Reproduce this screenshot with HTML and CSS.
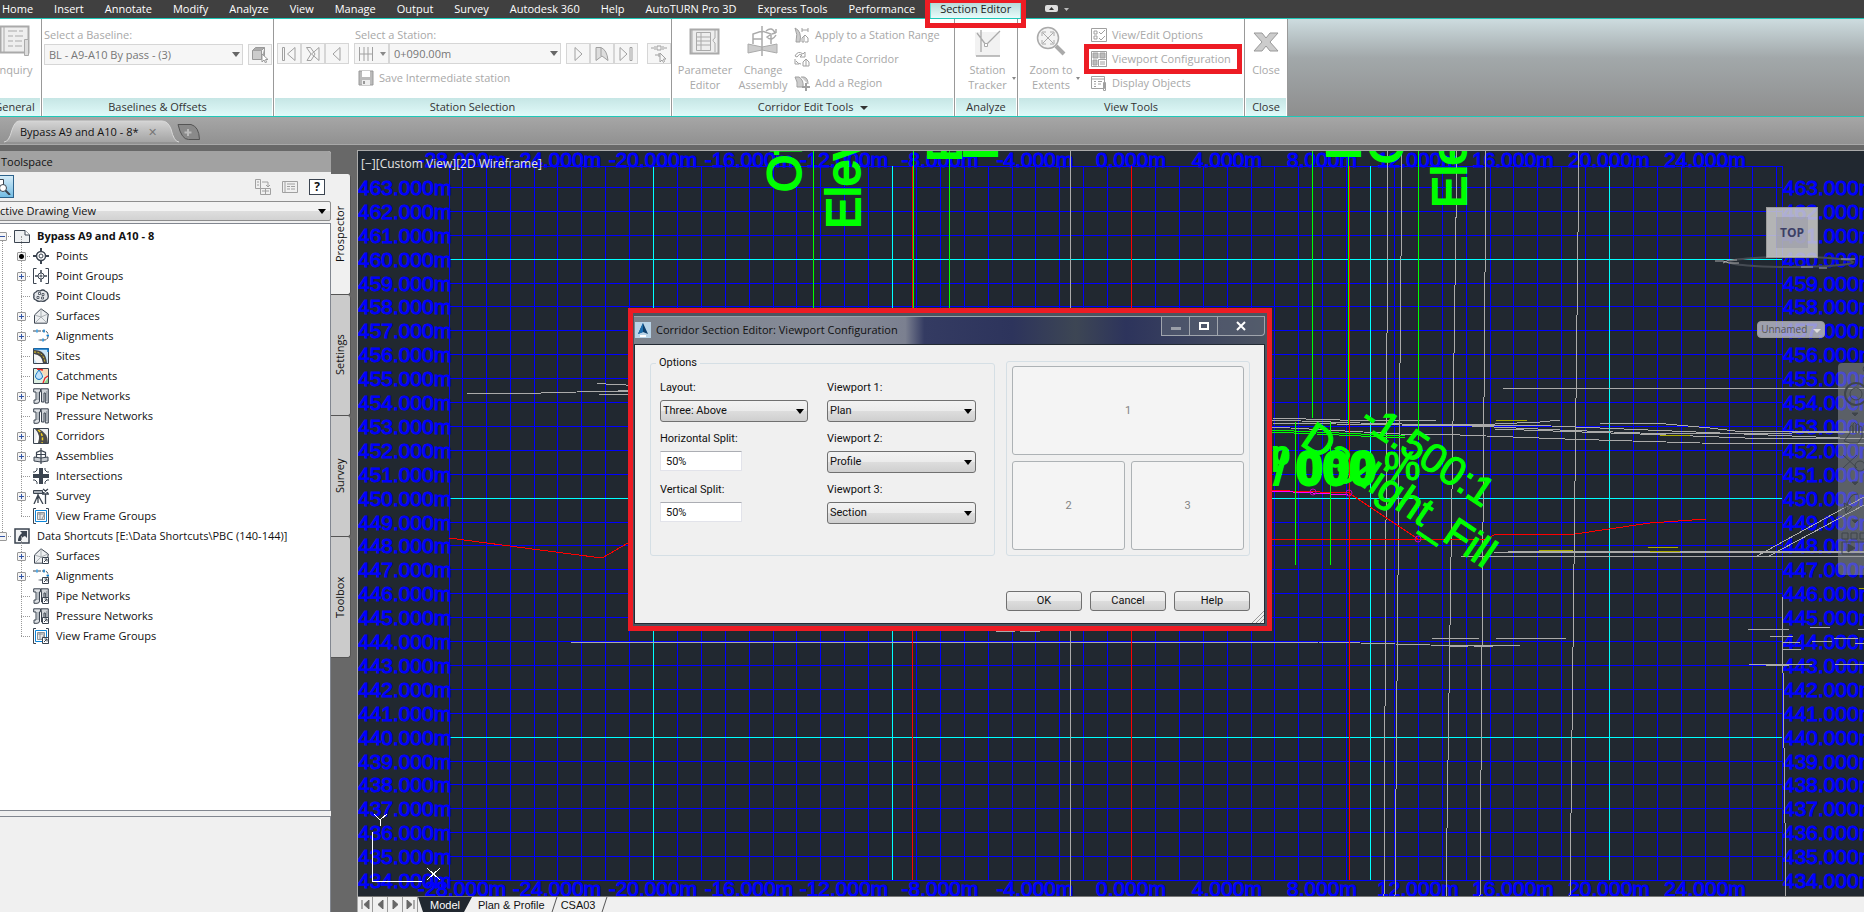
FILE: index.html
```
<!DOCTYPE html>
<html lang="en">
<head>
    <meta charset="UTF-8">
    <meta name="viewport" content="width=device-width, initial-scale=1.0">
    <title>Bypass A9 and A10 - 8</title>
    <link rel="stylesheet" href="styles.css">
</head>
<body>

    <!-- shared icons -->
    <svg class="sprite" aria-hidden="true">
        <symbol id="i-drawing" viewBox="0 0 16 16"><path d="M.5 2.500H11L15.500 7v7.500H.5z" fill="#eef0f2" stroke="#3b4450"/><path d="M11 2.500V7h4.500" fill="#fff" stroke="#3b4450"/></symbol>
        <symbol id="i-points" viewBox="0 0 16 16"><g fill="none" stroke="#3b4450"><circle cx="8" cy="8" r="4.500" stroke-width="1.500"/><circle cx="8" cy="8" r="2"/><path d="M8 0v4M8 12v4M0 8h4M12 8h4" stroke-width="2"/></g></symbol>
        <symbol id="i-pointgroups" viewBox="0 0 16 16"><g fill="none" stroke="#3b4450"><path d="M3.500 .5h-3v15h3M12.500 .5h3v15h-3"/><circle cx="8" cy="8" r="3"/><circle cx="8" cy="8" r="1"/><path d="M8 2v3M8 11v3M2 8h3M11 8h3"  stroke-width="1.500"/></g></symbol>
        <symbol id="i-clouds" viewBox="0 0 16 16"><path d="M3 4Q4 2 7 3q3-2 5 0 3 1 3 4 1 4-2 5-2 2-5 1-3 1-5-1-3-1-2-4-1-3 2-4z" fill="#e4e6e9" stroke="#3b4450" stroke-width="1.300"/><path d="M5.500 4.500h2v2h-2zM9 5.500h2v2H9zM4 8.500h2v2H4zM8.500 9h2v2h-2z" fill="#fff" stroke="#3b4450" stroke-width=".8"/></symbol>
        <symbol id="i-surfaces" viewBox="0 0 16 16"><path d="M8 .8L15.300 6 14 15.200H1.500V7z" fill="#eceef0" stroke="#3b4450"/><path d="M8 1v8M8 9l7-3M8 9l6 6M8 9l-6 6M8 9L1.500 7" fill="none" stroke="#a4a9ae" stroke-width=".9"/></symbol>
        <symbol id="i-alignments" viewBox="0 0 16 16"><path d="M0 3h3M5 3h6q4 0 4 4M15 8q0 4-4 4H5" fill="none" stroke="#3b4450" stroke-dasharray="3 1"/><path d="M4 1.500v3M11 1.500v3M13.500 7.500h2.500M10 10.500v3" stroke="#0b84d8" stroke-width="1.400"/></symbol>
        <symbol id="i-sites" viewBox="0 0 16 16"><path d="M.5 .5h15v15H.5z" fill="#c9e4f7" stroke="#3b4450"/><path d="M1 5h5l5 5v5H4L1 11z" fill="#f5f6f7"/><path d="M1 2q12 0 13 13h-4Q9 7 1 6z" fill="#474747"/><path d="M1 4q10 0 11 11" fill="none" stroke="#f2d020" stroke-dasharray="2 1.500"/><path d="M1 1h14v3" fill="none" stroke="#0b74c8" stroke-width="1.500"/></symbol>
        <symbol id="i-catchments" viewBox="0 0 16 16"><path d="M.5 .5h15v15H.5z" fill="#dcefe2" stroke="#3b4450"/><path d="M8 1h7v8l-3-1-4-4z" fill="#f6d9b8"/><path d="M10 15l2-5 3-2M4 1l6 1" fill="none" stroke="#e22" stroke-width="1.300"/><path d="M6 2Q2 7 2.500 9q1 2.500 3.500 2.500T9.500 9Q9.800 7 6 2z" fill="#bfe2fa" stroke="#1573c4"/><path d="M11 15l4-5v5z" fill="#8fce8a"/></symbol>
        <symbol id="i-pipes" viewBox="0 0 16 16"><path d="M.7 .8h6.800v3h-1V13q0 2.300-2.500 2.300H1V12h2V4H.7z" fill="#dfe2e5" stroke="#3b4450"/><path d="M8 .8h7.300V15h-3V5H11v9H8.500V5z" fill="#cfd3d8" stroke="#3b4450"/><path d="M5 4v8M13.800 3v10" stroke="#8c949d"/></symbol>
        <symbol id="i-corridors" viewBox="0 0 16 16"><path d="M.5 .5h15v15H.5z" fill="#eceef0" stroke="#3b4450"/><path d="M3 1q7 4 6 14H2Q5 8 3 1z" fill="#fff"/><path d="M2 1h4q9 4 9 14H5Q8 7 2 1z" fill="#4b4b4b"/><path d="M5 2q6 4 4 13" fill="none" stroke="#f2d020" stroke-width="1.500" stroke-dasharray="3 1.500"/></symbol>
        <symbol id="i-assemblies" viewBox="0 0 16 16"><path d="M1 9l7 1 7-1v4l-7 1-7-1z" fill="#c7cbd0" stroke="#3b4450"/><path d="M3.500 9V4.500L8 2.500l4.500 2V9M8 0v16M3.500 6.500h9" fill="none" stroke="#3b4450" stroke-width="1.200"/></symbol>
        <symbol id="i-intersections" viewBox="0 0 16 16"><path d="M8 0v16M0 8h16" stroke="#3b4450" stroke-width="4"/><path d="M4 0v2L2 4H0M12 0v2l2 2h2M4 16v-2l-2-2H0M12 16v-2l2-2h2" fill="none" stroke="#3b4450"/></symbol>
        <symbol id="i-survey" viewBox="0 0 16 16"><path d="M.5 2.500h9v3h-9z" fill="#aab0b7" stroke="#3b4450"/><path d="M5 6v4M5 7l-4 9M5 7l5 9M5 8v7M12.500 6v10M9 6h7M10 1l5 4M15 1l-5 4" fill="none" stroke="#3b4450" stroke-width="1.300"/></symbol>
        <symbol id="i-frames" viewBox="0 0 16 16"><path d="M3 .5H.5v15H3M13 .5h2.500v15H13" fill="none" stroke="#3b4450"/><path d="M2.500 2.500h11v11h-11z" fill="#fff" stroke="#0b84d8"/><path d="M4.500 4.500h7v7h-7z" fill="#e8e8e8" stroke="#8c9298"/><path d="M5 6h6M7 5v6M9 11l2-4" stroke="#8c9298"/></symbol>
        <symbol id="i-link" viewBox="0 0 16 16"><path d="M9.500 9.500h6v6h-6z" fill="#fff" stroke="#3b4450"/><path d="M11 14l3-3M11.500 11H14v2.500" fill="none" stroke="#3b4450"/></symbol>
        <symbol id="i-shortcuts" viewBox="0 0 16 16"><path d="M1 1h14v14H1z" fill="#f2f3f4" stroke="#3b4450" stroke-width="1.500"/><path d="M6 3h7v7l-2-2q-4 1-4 5H4q0-5 4-8z" fill="#3b4450"/></symbol>
    </svg>

    <nav class="menu-bar">
        <a href="#">Home</a>
        <a href="#">Insert</a>
        <a href="#">Annotate</a>
        <a href="#">Modify</a>
        <a href="#">Analyze</a>
        <a href="#">View</a>
        <a href="#">Manage</a>
        <a href="#">Output</a>
        <a href="#">Survey</a>
        <a href="#">Autodesk 360</a>
        <a href="#">Help</a>
        <a href="#">AutoTURN Pro 3D</a>
        <a href="#">Express Tools</a>
        <a href="#">Performance</a>
        <a href="#" class="active">Section Editor</a>
        <button class="ribbon-toggle" aria-label="Minimize ribbon">
            <svg width="26" height="8" viewBox="0 0 26 8"><rect width="13" height="7" rx="2" fill="#ddd"/><path d="M4 5l2.500-3L9 5z" fill="#333"/><path d="M19 3h5l-2.500 3z" fill="#bbb"/></svg>
        </button>
    </nav>

    <div class="ribbon">
        <section class="panel panel-general">
            <div class="panel-body">
                <button class="big" disabled>
                    <svg width="32" height="32" viewBox="0 0 32 32" fill="none" stroke="#aaa"><path d="M1.500 1.500h28v26h-28z" fill="#eee" stroke-width="2"/><path d="M5 2v25M9 6h9M20 6h4M9 11h5M16 11h8M9 16h5M16 16h7M9 21h5M16 21h7"/><path d="M25.500 14.500h4v16h-4z" fill="#ddd"/></svg>
                    Inquiry
                </button>
            </div>
            <h2>General</h2>
        </section>

        <section class="panel panel-baselines">
            <div class="panel-body stack">
                <label for="baseline">Select a Baseline:</label>
                <div class="tool-row">
                    <span class="combo"><select id="baseline"><option>BL - A9-A10 By pass - (3)</option></select></span>
                    <button class="tool" disabled aria-label="Pick baseline"><svg width="18" height="18" viewBox="0 0 18 18" stroke="#999" fill="#ccc"><path d="M1.500 4.500h9v9h-9z"/><path d="M1.500 4.500l3-3h9l-3 3M13.500 1.500v8l-3 3" fill="#aaa"/><path d="M11 8v8l2-2 1.500 3 1-1-1-2.500H17z" fill="#fff"/></svg></button>
                </div>
            </div>
            <h2>Baselines &amp; Offsets</h2>
        </section>

        <section class="panel panel-station">
            <div class="panel-body stack">
                <label class="station-label" for="station">Select a Station:</label>
                <div class="tool-row">
                    <div class="group">
                        <button class="tool" disabled aria-label="First station"><svg class="line" width="16" height="16"><path d="M1.500 1.500h2v13h-2zM14 1.500v13L6.500 8z"/></svg></button>
                        <button class="tool" disabled aria-label="Previous region"><svg class="line" width="16" height="16"><path d="M1.500 1.500h4L10 8l-4 6.500h-4L6 8zM14 1.500v13L6.500 8z"/></svg></button>
                        <button class="tool" disabled aria-label="Previous station"><svg class="line" width="16" height="16"><path d="M11 1.500v13L4 8z"/></svg></button>
                    </div>
                    <div class="group station-pick">
                        <button class="tool split" disabled aria-label="Station list"><svg class="line" width="16" height="14"><path d="M1.500 0v14M6 0v14M10 0v14M14.500 0v14M1 7h14"/></svg><i class="caret"></i></button>
                        <span class="combo"><select id="station"><option>0+090.00m</option></select></span>
                    </div>
                    <div class="group">
                        <button class="tool" disabled aria-label="Next station"><svg class="line" width="16" height="16"><path d="M5 1.500v13L12 8z"/></svg></button>
                        <button class="tool" disabled aria-label="Next region"><svg class="line" width="16" height="16"><path d="M2 1.500v13L8 10l6 4.500Q13 4 7 1.500L2 1.500M7 2v8" fill="#ddd"/></svg></button>
                        <button class="tool" disabled aria-label="Last station"><svg class="line" width="16" height="16"><path d="M2 1.500v13L9 8zM12 1.500h2v13h-2z"/></svg></button>
                    </div>
                    <button class="tool last-tool" disabled aria-label="Pick station"><svg class="line" width="18" height="18"><path d="M1 3h3M14 3h3M7 1h4v4H7zM13 1v4M5 1v4M10 8v9l2-2 1.500 2.500 1-1-1-2.500H16zM5 10h4M9 8v4"/></svg></button>
                </div>
                <button class="small save" disabled>
                    <svg width="16" height="16" viewBox="0 0 16 16"><path d="M1 1h14v14H1z" fill="#bbb" stroke="#999"/><path d="M4 1h8v6H4z" fill="#fff"/><path d="M4 10h8v5H4z" fill="#eee"/><path d="M5 11h2v3H5z" fill="#999"/></svg>
                    Save Intermediate station
                </button>
            </div>
            <h2>Station Selection</h2>
        </section>

        <section class="panel panel-corridor">
            <div class="panel-body">
                <button class="big" disabled>
                    <svg width="32" height="32" viewBox="0 0 32 32" fill="none" stroke="#aaa"><path d="M1.500 4.500h28v24h-28z" fill="#eee" stroke-width="2"/><path d="M7.500 7.500h14v18h-14zM7 12h14M7 16h14M7 20h14M12 8v17M3 5v23M26 5v8q-4 2 0 5v9"/></svg>
                    Parameter<br>Editor
                </button>
                <button class="big" disabled>
                    <svg width="32" height="32" viewBox="0 0 32 32" fill="none" stroke="#aaa"><path d="M1 19l14 3 15-3v9l-15-3-14 3z" fill="#ccc"/><path d="M6 19V9l9-3 9 3v10M15 1v30M6 14h9M19 6q6-5 9 2l-3 1M29 10q-4 7-9 2l3-2M29 4v4" stroke-width="1.500"/></svg>
                    Change<br>Assembly
                </button>
                <div class="small-list">
                    <button class="small" disabled><svg class="line" width="16" height="16"><path d="M1 1q7 3 5 14H2Q4 7 1 1z" fill="#ccc"/><path d="M8 1v4M14 1v4M8 3h6M10 9v6H8v-4l3-3 3 3v4h-3"/></svg>Apply to a Station Range</button>
                    <button class="small" disabled><svg class="line" width="16" height="16"><path d="M1 5q3-6 8-2l2-2v5H6l2-2Q5 2 3 6zM1 8v5h4M2 10q2 3 5 3M9 15v-4l3-3 3 3v4zM12 8v7"/></svg>Update Corridor</button>
                    <button class="small" disabled><svg class="line" width="16" height="16"><path d="M1 2h4q5 3 4 10H3Q4 7 1 2zM7 2h3q4 1 4 7" fill="#ccc"/><path d="M12 8v8M8 12h8" stroke-width="2"/></svg>Add a Region</button>
                </div>
            </div>
            <h2>Corridor Edit Tools <i class="caret dark"></i></h2>
        </section>

        <section class="panel panel-analyze">
            <div class="panel-body">
                <button class="big" disabled>
                    <svg width="32" height="32" viewBox="0 0 32 32" fill="none" stroke="#aaa"><path d="M3 7v24h25V7z" fill="#f2f2f2" stroke="none"/><path d="M9 5v22M4 31h24M5 8l9 12L28 6" stroke-width="1.300"/><path d="M12.500 18.500h3v3h-3z" fill="#fff"/></svg>
                    Station<br>Tracker
                </button>
                <i class="caret corner"></i>
            </div>
            <h2>Analyze</h2>
        </section>

        <section class="panel panel-view">
            <div class="panel-body">
                <button class="big" disabled>
                    <svg width="32" height="32" viewBox="0 0 32 32" fill="none" stroke="#aaa"><circle cx="13" cy="13" r="10.500" fill="#f3f3f3" stroke-width="1.500"/><path d="M21 21l8 8" stroke-width="4"/><path d="M8 8l10 10M18 8L8 18M7 11V7h4M15 7h4v4M7 15v4h4M19 15v4h-4"/></svg>
                    Zoom to<br>Extents
                </button>
                <i class="caret corner"></i>
                <div class="small-list">
                    <button class="small" disabled><svg class="line" width="16" height="16"><path d="M.5 1.500h15v13H.5zM3 4h3v3H3zM3 9h3v3H3zM8 5l2 2 4-4M8 11l2 2 4-4"/></svg>View/Edit Options</button>
                    <button class="small highlighted" disabled><svg class="line" width="16" height="16"><path d="M.5 .5h15v15H.5z"/><path d="M2 2h5v5H2zM9 2h5v5H9zM2 9h4v5H2z" fill="#bbb"/><path d="M7.500 8.500h8v7h-8zM9 11h5M9 13h5" fill="#fff"/></svg>Viewport Configuration</button>
                    <button class="small" disabled><svg class="line" width="16" height="16"><path d="M.5 1.500h13v12H.5zM.5 4h13M3 6.500h2M7 6.500h4M3 9h2M7 9h3M3 11.500h2M12.500 7.500h2v8h-2z"/></svg>Display Objects</button>
                </div>
            </div>
            <h2>View Tools</h2>
        </section>

        <section class="panel panel-close">
            <div class="panel-body">
                <button class="big" disabled>
                    <svg width="32" height="32" viewBox="0 0 32 32"><path d="M4 8h8l4 5 4-5h8l-8 9 8 9h-8l-4-5-4 5H4l8-9z" fill="#ccc" stroke="#999"/></svg>
                    Close
                </button>
            </div>
            <h2>Close</h2>
        </section>
    </div>

    <div class="file-tabs">
        <svg class="file-shapes" width="210" height="27" viewBox="0 0 210 27">
            <defs><linearGradient id="tab" x2="0" y2="1"><stop offset="0" stop-color="#d4d4d4"/><stop offset="1" stop-color="#a4a4a4"/></linearGradient></defs>
            <path d="M4 25q5 0 8-12 3-9 7-9h143q6 0 9 8 3 13 8 13z" fill="url(#tab)"/>
            <path d="M4 25q5 0 8-12 3-9 7-9h143q6 0 9 8 3 13 8 13" fill="none" stroke="#d8d8d8"/>
            <path d="M178 7.500h13q8 2 8.500 15h-11q-7 0-10.500-15z" fill="#8a8a8a" stroke="#555"/>
            <path d="M188 12v7M184.500 15.500h7" stroke="#bbb" stroke-width="2"/>
        </svg>
        <a class="file-tab" href="#">Bypass A9 and A10 - 8*</a>
        <button class="file-close" aria-label="Close drawing">✕</button>
    </div>

    <main class="workspace">
        <aside class="toolspace">
            <h1>Toolspace</h1>
            <div class="toolspace-tools">
                <button class="finder" aria-label="Item view"><svg width="16" height="16" viewBox="0 0 16 16" fill="#fff" stroke="#3b4450"><path d="M.5 .5h8v11h-8z"/><circle cx="8" cy="9" r="3.500"/><path d="M10.500 11.500L15 16" stroke-width="2"/></svg></button>
                <button class="flat" aria-label="Panorama"><svg class="line" width="16" height="16"><path d="M.5 .5h5v9h-5zM2 3h2M2 6h2M7 3h6v5M11 6l2 2 2-2M5.500 9.500h10v6h-10zM7 12h3M11 12h3M10.500 10v5"/></svg></button>
                <button class="flat" aria-label="Preview"><svg class="line" width="16" height="16"><path d="M.5 2.500h15v11H.5zM3 3v10M5 5h8M5 7.500h3M9 7.500h4M5 10h3M9 10h4"/></svg></button>
                <button class="help" aria-label="Help">?</button>
            </div>
            <div class="view-picker"><select aria-label="Toolspace view"><option>Active Drawing View</option></select></div>

            <ul class="tree">
                <li class="root"><button class="expander minus" aria-label="Collapse"></button><svg><use href="#i-drawing"/></svg><b>Bypass A9 and A10 - 8</b>
                    <ul>
                        <li><button class="expander dot" aria-label="Points"></button><svg><use href="#i-points"/></svg>Points</li>
                        <li><button class="expander" aria-label="Expand"></button><svg><use href="#i-pointgroups"/></svg>Point Groups</li>
                        <li><svg><use href="#i-clouds"/></svg>Point Clouds</li>
                        <li><button class="expander" aria-label="Expand"></button><svg><use href="#i-surfaces"/></svg>Surfaces</li>
                        <li><button class="expander" aria-label="Expand"></button><svg><use href="#i-alignments"/></svg>Alignments</li>
                        <li><svg><use href="#i-sites"/></svg>Sites</li>
                        <li><svg><use href="#i-catchments"/></svg>Catchments</li>
                        <li><button class="expander" aria-label="Expand"></button><svg><use href="#i-pipes"/></svg>Pipe Networks</li>
                        <li><svg><use href="#i-pipes"/></svg>Pressure Networks</li>
                        <li><button class="expander" aria-label="Expand"></button><svg><use href="#i-corridors"/></svg>Corridors</li>
                        <li><button class="expander" aria-label="Expand"></button><svg><use href="#i-assemblies"/></svg>Assemblies</li>
                        <li><svg><use href="#i-intersections"/></svg>Intersections</li>
                        <li><button class="expander" aria-label="Expand"></button><svg><use href="#i-survey"/></svg>Survey</li>
                        <li><svg><use href="#i-frames"/></svg>View Frame Groups</li>
                    </ul>
                </li>
                <li class="root"><button class="expander minus" aria-label="Collapse"></button><svg><use href="#i-shortcuts"/></svg>Data Shortcuts [E:\Data Shortcuts\PBC (140-144)]
                    <ul>
                        <li><button class="expander" aria-label="Expand"></button><svg><use href="#i-surfaces"/><use href="#i-link"/></svg>Surfaces</li>
                        <li><button class="expander" aria-label="Expand"></button><svg><use href="#i-alignments"/><use href="#i-link"/></svg>Alignments</li>
                        <li><svg><use href="#i-pipes"/><use href="#i-link"/></svg>Pipe Networks</li>
                        <li><svg><use href="#i-pipes"/><use href="#i-link"/></svg>Pressure Networks</li>
                        <li><svg><use href="#i-frames"/><use href="#i-link"/></svg>View Frame Groups</li>
                    </ul>
                </li>
            </ul>
            <div class="item-view"></div>
        </aside>

        <div class="side-tabs">
            <button class="active">Prospector</button>
            <button>Settings</button>
            <button>Survey</button>
            <button>Toolbox</button>
        </div>

        <div class="canvas-column">
            <div class="canvas">
                <svg class="drawing" viewBox="358 151 1506 746" preserveAspectRatio="xMinYMin slice">
                    <g id="grid" class="grid"></g>

                    <g class="ground">
                        <path d="M1388 151L1384 897M1402 151L1395 897M1457 151L1446 897M1486 151L1480 897M1579 151L1570 897M1782 597L1786 897M1070 151V896"/>
                        <path d="M467 393H541L577 392 612 391H628M597 383L606 384H624L628 386M599 394H628M609 392L628 390"/>
                        <path d="M1503 388H1864"/>
                        <path d="M1272 418L1340 420H1436M1272 420L1360 423 1444 425H1527L1600 428 1864 439M1272 427L1400 434 1460 435 1565 439 1700 443 1864 444M1444 424H1495L1540 422 1560 420"/>
                        <path d="M1495 429L1640 434 1745 438H1864M1472 426L1560 430 1640 433 1720 434 1864 432M1600 423H1655L1710 428 1735 431H1864M1272 423L1400 425 1520 426"/>
                        <path d="M1494 552H1864M1508 551H1864M1461 556H1864M1757 556L1864 497M1769 556L1864 505"/>
                        <path d="M571 642H1318L1360 643 1430 645 1520 646H1864M1432 638H1479M1496 638H1566M1449 646H1468M1474 646H1493"/>
                        <path d="M1748 630L1790 629M1770 636H1793M1810 627H1830M1782 642H1800M1812 641H1832M1834 638H1858M1782 649H1801M1749 664H1812M1766 665H1789M1835 664H1864M1858 629H1864M1855 643H1864M996 631H1015M1020 631H1040"/>
                    </g>
                    <path class="yellow" d="M1496 420H1527M1660 435H1690M1539 550H1573M1648 547H1678M1650 551H1680M1859 588H1864"/>
                    <path class="red" d="M912 166V880M1131 166V880M1349 166V880M449 538L540 550 602 558 628 543M1272 540L1410 539 1485 540 1494 535 1575 534 1650 523 1706 519M1272 490L1290 491 1349 493 1418 539"/>
                    <path class="magenta" d="M1272 491L1313 493 1348 495"/>
                    <path class="green" d="M813 151V320M913 151V320M949 151V320M1312 151V418M1348 151V424M1418 151V440M1295 422V565M1330 422V565M1272 430L1405 436M1272 432L1405 438"/>
                    <g class="marks"><circle cx="1313" cy="492" r="3"/><circle cx="1349" cy="493" r="3"/><circle cx="1418" cy="539" r="3"/></g>

                    <g class="notes">
                        <text transform="translate(801 192) rotate(-90)">Offset</text>
                        <text transform="translate(860 229) rotate(-90)">Elev</text>
                        <text transform="translate(961 162) rotate(-90)">E</text>
                        <text transform="translate(997 160) rotate(-90)">L</text>
                        <text transform="translate(1360 160) rotate(-90)">L</text>
                        <text transform="translate(1403 164) rotate(-90)">O</text>
                        <text transform="translate(1466 208) rotate(-90)">Elev</text>
                        <text class="slope" transform="translate(1358 424) rotate(34)">-1.500:1</text>
                        <text class="slope" transform="translate(1299 444) rotate(34)">Daylight_Fill</text>
                        <text class="percent" x="1274" y="485">/<tspan class="heavy" x="1296">000</tspan></text>
                        <text class="small-note" x="1272" y="464">p</text>
                        <text class="slope" x="1384" y="480">%</text>
                    </g>

                    <path class="ucs" d="M372 832V881H422M374 814L380 820V826M387 814L380 820M427 868L440 880M440 868L427 880"/>
                </svg>

                <div class="view-label">[−][Custom View][2D Wireframe]</div>

                <svg class="compass" width="144" height="16" viewBox="0 0 144 16"><ellipse cx="76" cy="7" rx="62" ry="5" fill="none" stroke="#454b53" stroke-width="2"/><path d="M0 6h8l6 2h10M22 5h-8l-6 3M86 12h12M104 13h8M126 4h14" fill="none" stroke="#aaa"/></svg>
                <button class="view-cube"><span>TOP</span></button>
                <button class="ucs-menu">Unnamed <i></i></button>

                <div class="nav-bar">
                    <svg width="40" height="212" viewBox="0 0 40 212" fill="none" stroke="#3f454b">
                        <circle cx="28" cy="6" r="3"/>
                        <circle cx="18" cy="31" r="11" stroke-width="2"/><circle cx="18" cy="31" r="6"/><path d="M14 50h6l-3 3z" fill="#3f454b"/>
                        <path d="M6 78l6-8v-6q2-3 3 0v6-9q2-3 3 0v9-8q2-2 3 0v8-6q3-2 3 2v8l-4 6h-8z"/>
                        <path d="M5 92l14 13M19 92L5 105"/><circle cx="22" cy="103" r="5"/><path d="M14 119h6l-3 3z" fill="#3f454b"/>
                        <path d="M8 148q2-18 12-17M6 140l8 4-6 6z"/><path d="M14 157h6l-3 3z" fill="#3f454b"/>
                        <path d="M4 170h6v6H4zM13 170h6v6h-6zM22 170h6v6h-6zM4 179h24v12H4z"/><path d="M10 181l7 4-7 4z" fill="#3f454b"/>
                    </svg>
                </div>
            </div>

            <div class="layout-tabs">
                <button aria-label="First layout"><svg width="9" height="9"><path d="M1 0v9M8 0v9L3 4.500z"/></svg></button>
                <button aria-label="Previous layout"><svg width="9" height="9"><path d="M7 0v9L2 4.500z"/></svg></button>
                <button aria-label="Next layout"><svg width="9" height="9"><path d="M2 0v9l5-4.500z"/></svg></button>
                <button aria-label="Last layout"><svg width="9" height="9"><path d="M1 0v9l5-4.500zM8 0v9"/></svg></button>
                <a href="#" class="active">Model</a>
                <a href="#">Plan &amp; Profile</a>
                <a href="#">CSA03</a>
            </div>
        </div>
    </main>

    <div class="dialog" role="dialog" aria-labelledby="dialog-title">
        <div class="dialog-title">
            <svg width="16" height="16" viewBox="0 0 16 16"><path d="M0 0h16v16H0z" fill="#b9d4e8"/><path d="M8 1l5 11-5-2-5 2z" fill="#0d3f6e"/><path d="M8 1v9l-5 2z" fill="#1c6fae"/><path d="M5 14h6" stroke="#fff" stroke-width="2"/></svg>
            <span id="dialog-title">Corridor Section Editor: Viewport Configuration</span>
            <div class="window-buttons">
                <button aria-label="Minimize"><svg width="12" height="10"><path d="M1 6h10v3H1z" fill="#9a9fa8"/></svg></button>
                <button aria-label="Maximize"><svg width="12" height="10"><path d="M2 2h8v6H2z" fill="none" stroke="#fff" stroke-width="2"/></svg></button>
                <button class="close" aria-label="Close"><svg width="12" height="10"><path d="M2 1l8 8M10 1L2 9" stroke="#fff" stroke-width="2"/></svg></button>
            </div>
        </div>
        <form class="dialog-body">
            <div class="groups">
                <fieldset class="options">
                    <legend>Options</legend>
                    <div class="field">
                        <label for="layout">Layout:</label>
                        <span class="pick"><select id="layout"><option>Three: Above</option></select></span>
                    </div>
                    <div class="field">
                        <label for="vp1">Viewport 1:</label>
                        <span class="pick"><select id="vp1"><option>Plan</option><option>Profile</option><option>Section</option></select></span>
                    </div>
                    <div class="field">
                        <label for="hsplit">Horizontal Split:</label>
                        <input id="hsplit" type="text" value="50%">
                    </div>
                    <div class="field">
                        <label for="vp2">Viewport 2:</label>
                        <span class="pick"><select id="vp2"><option>Profile</option><option>Plan</option><option>Section</option></select></span>
                    </div>
                    <div class="field">
                        <label for="vsplit">Vertical Split:</label>
                        <input id="vsplit" type="text" value="50%">
                    </div>
                    <div class="field">
                        <label for="vp3">Viewport 3:</label>
                        <span class="pick"><select id="vp3"><option>Section</option><option>Plan</option><option>Profile</option></select></span>
                    </div>
                </fieldset>
                <div class="preview">
                    <button type="button" class="wide" disabled>1</button>
                    <button type="button" disabled>2</button>
                    <button type="button" disabled>3</button>
                </div>
            </div>
            <div class="actions">
                <button type="button">OK</button>
                <button type="button">Cancel</button>
                <button type="button">Help</button>
            </div>
            <svg class="grip" width="12" height="12"><path d="M0 12L12 0M4 12l8-8M8 12l4-4"/></svg>
        </form>
    </div>

    <script src="script.js"></script>
</body>
</html>
```

FILE: styles.css
```
* {
    margin: 0;
    padding: 0;
    box-sizing: border-box;
}

body {
    font-family: "Open Sans", "Noto Sans", sans-serif;
    font-size: 11px;
    line-height: 16px;
    height: 100vh;
    display: flex;
    flex-direction: column;
    overflow: hidden;
    background: #686868;
    position: relative;
}

button, select, input {
    font: inherit;
    color: inherit;
}

button {
    background: none;
    border: none;
}

a {
    color: inherit;
    text-decoration: none;
}

svg {
    display: block;
    flex: none;
}

.sprite {
    position: absolute;
    width: 0;
    height: 0;
}

/* Menu bar */
.menu-bar {
    display: flex;
    height: 19px;
    background: #404040;
    border-bottom: 1px solid #1fc8b8;
    color: #fff;
    line-height: 18px;
    white-space: nowrap;
    padding-left: 2px;
    gap: 21px;
}

.menu-bar .active {
    position: relative;
    color: #222;
    background: linear-gradient(#aed6d4, #e8fbfa);
    margin: 0 -9px 0 -6px;
    padding: 0 9px;
    border: solid #5fe0d8;
    border-width: 0 1px;
}

.menu-bar .active::after {
    content: "";
    position: absolute;
    z-index: 2;
    inset: -2px -6px -10px;
    border: 5px solid #ed1c24;
}

.ribbon-toggle {
    margin-left: 12px;
}

/* Ribbon */
.ribbon {
    display: flex;
    height: 98px;
    background: linear-gradient(#cddcdf, #a2a8aa 40%, #8e8e8e);
    border-bottom: 1px solid #1fc8b8;
    color: #a8a8a8;
    white-space: nowrap;
}

.panel {
    display: flex;
    flex-direction: column;
    background: #fff;
    border-right: 1px solid #999;
    padding: 0 1px;
}

.panel-body {
    flex: 1;
    display: flex;
    align-items: flex-start;
    padding: 4px 3px 0;
    position: relative;
}

.panel-body.stack {
    flex-direction: column;
    padding: 8px 0 0 1px;
}

.panel h2 {
    height: 18px;
    font-size: 11px;
    line-height: 18px;
    font-weight: normal;
    text-align: center;
    color: #333;
    background: linear-gradient(#c6e6e5, #e0faf9);
}

.panel-general {
    width: 54px;
    margin-left: -12px;
}

.panel-baselines {
    width: 232px;
}

.panel-station {
    width: 398px;
}

.panel-corridor {
    width: 283px;
}

.panel-analyze {
    width: 63px;
}

.panel-view {
    width: 227px;
}

.panel-close {
    width: 43px;
}

.panel-close .panel-body,
.panel-general .panel-body,
.panel-analyze .panel-body {
    justify-content: center;
}

.big {
    display: flex;
    flex-direction: column;
    align-items: center;
    line-height: 15px;
    padding-top: 2px;
    width: 58px;
    color: inherit;
}

.big svg {
    margin-bottom: 5px;
}

.small-list {
    display: flex;
    flex-direction: column;
    gap: 8px;
    padding: 4px 0 0 2px;
}

.small {
    display: flex;
    align-items: center;
    gap: 5px;
    height: 16px;
    color: inherit;
}

.highlighted {
    width: 144px;
    outline: 5px solid #ed1c24;
    outline-offset: 2px;
}

.line {
    fill: none;
    stroke: #a0a0a0;
}

.tool-row {
    display: flex;
    align-items: center;
}

.group {
    display: flex;
}

.tool {
    width: 24px;
    height: 21px;
    border: 1px solid #d6d6d6;
    background: #f6f6f6;
    display: flex;
    align-items: center;
    justify-content: center;
}

.split {
    width: 35px;
    gap: 6px;
}

.combo {
    position: relative;
    flex: 1;
}

.combo select {
    display: block;
    appearance: none;
    width: 100%;
    height: 21px;
    border: 1px solid #d6d6d6;
    background: #f6f6f6;
    color: #777;
    padding-left: 4px;
}

.combo::after,
.pick::after,
.view-picker::after {
    content: "";
    position: absolute;
    right: 3px;
    top: 8px;
    border: 4px solid transparent;
    border-top: 5px solid #666;
    border-bottom: none;
    pointer-events: none;
}

.caret {
    display: inline-block;
    border: 3px solid transparent;
    border-top: 4px solid #888;
    border-bottom: none;
}

.caret.dark {
    border-width: 4px 4px 0;
    border-top-color: #333;
    margin-left: 4px;
    vertical-align: 1px;
}

.caret.corner {
    align-self: flex-end;
    margin: 0 -3px 18px -4px;
    border-width: 3px 2px 0;
}

.panel-baselines .tool-row {
    width: 228px;
    gap: 5px;
    margin-top: 1px;
}

.panel-station .tool-row {
    padding: 0 1px;
    gap: 5px;
    width: 396px;
}

.station-label {
    padding-left: 79px;
}

.station-pick {
    flex: 1;
}

.last-tool {
    margin-left: 4px;
}

.save {
    margin: 6px 0 0 82px;
}

.panel-view .small-list {
    padding-left: 14px;
}

/* Drawing tabs */
.file-tabs {
    height: 28px;
    background: linear-gradient(#a6a6a6, #919191);
    border-bottom: 1px solid #a8a8a8;
    position: relative;
    display: flex;
    align-items: center;
    padding-left: 20px;
    gap: 9px;
    color: #111;
}

.file-shapes {
    position: absolute;
    left: 0;
    top: 0;
}

.file-tab, .file-close {
    position: relative;
    padding-top: 2px;
}

.file-close {
    color: #777;
}

.workspace {
    flex: 1;
    display: flex;
    min-height: 0;
    padding-top: 5px;
}

/* Toolspace */
.toolspace {
    width: 331px;
    display: flex;
    flex-direction: column;
    background: #f0f0f0;
    border-radius: 0 3px 0 0;
    overflow: hidden;
    margin-top: 1px;
    color: #111;
}

.toolspace h1 {
    font-size: 11px;
    font-weight: normal;
    line-height: 21px;
    height: 21px;
    background: #a2a2a2;
    padding-left: 1px;
}

.toolspace-tools {
    display: flex;
    align-items: center;
    height: 29px;
    padding-right: 6px;
    gap: 11px;
}

.finder {
    width: 22px;
    height: 23px;
    margin-left: -8px;
    margin-right: auto;
    border: 1px solid #2c628b;
    background: linear-gradient(#d5ecf8, #74bde4);
    display: flex;
    align-items: center;
    justify-content: center;
}

.help {
    width: 16px;
    height: 16px;
    border: 1px solid #3b4450;
    background: #fff;
    font-weight: bold;
    font-size: 12px;
    line-height: 14px;
}

.view-picker {
    position: relative;
    height: 20px;
    margin-left: -11px;
}

.view-picker select {
    appearance: none;
    width: 100%;
    height: 20px;
    border: 1px solid #8e8e8e;
    border-radius: 2px;
    background: linear-gradient(#f3f3f3 50%, #dedede 50%, #d2d2d2);
    padding-left: 3px;
}

.view-picker::after {
    right: 5px;
    border-top-color: #000;
}

.tree {
    flex: 1;
    list-style: none;
    margin-top: 2px;
    padding-top: 2px;
    background: #fff;
    border: solid #828790;
    border-width: 1px 1px 1px 0;
    line-height: 20px;
    white-space: nowrap;
    overflow: hidden;
}

.tree ul {
    list-style: none;
}

.tree li {
    position: relative;
    padding-left: 37px;
}

.tree ul li {
    padding-left: 19px;
}

.tree svg {
    position: absolute;
    left: 14px;
    top: 2px;
    width: 16px;
    height: 16px;
}

.tree ul svg {
    left: -4px;
}

/* dotted guide lines */
.tree li::before {
    content: "";
    position: absolute;
    left: 2px;
    top: 10px;
    width: 9px;
    border-top: 1px dotted #999;
}

.tree ul li::before {
    left: -16px;
}

.tree ul li::after,
.tree .root:first-child::after {
    content: "";
    position: absolute;
    left: -16px;
    top: -10px;
    height: 20px;
    border-left: 1px dotted #999;
}

.tree .root:first-child::after {
    left: 2px;
    top: 14px;
    height: 100%;
}

.expander {
    position: absolute;
    z-index: 1;
    left: -2px;
    top: 6px;
    width: 9px;
    height: 9px;
    border: 1px solid #989898;
    border-radius: 1px;
    background:
        linear-gradient(#3355a5, #3355a5) center / 5px 1px no-repeat,
        linear-gradient(#3355a5, #3355a5) center / 1px 5px no-repeat,
        #f4f4f4;
}

.tree ul .expander {
    left: -20px;
}

.expander.minus {
    background: linear-gradient(#3355a5, #3355a5) center / 5px 1px no-repeat, #f4f4f4;
}

.expander.dot {
    background: radial-gradient(#000 2px, #f4f4f4 3px);
}

.item-view {
    height: 96px;
    margin-top: 5px;
    border: solid #828790;
    border-width: 1px 1px 0 0;
}

.side-tabs {
    width: 26px;
    padding-top: 24px;
    display: flex;
    flex-direction: column;
}

.side-tabs button {
    width: 20px;
    height: 121px;
    padding-left: 2px;
    writing-mode: vertical-rl;
    transform: rotate(180deg);
    background: #cbcbcb;
    border: solid #555;
    border-width: 1px 0 0 1px;
    border-radius: 3px 0 0 3px;
    color: #111;
}

.side-tabs .active {
    background: #f0f0f0;
}

/* Drawing area */
.canvas-column {
    flex: 1;
    min-width: 0;
    display: flex;
    flex-direction: column;
    border-left: 1px solid #aaa;
    border-top: 1px solid #aaa;
}

.canvas {
    flex: 1;
    min-height: 0;
    position: relative;
    overflow: hidden;
    background: #212830;
}

.drawing {
    position: absolute;
    width: 100%;
    height: 100%;
    font-family: "Liberation Sans", Arial, sans-serif;
}

.drawing path {
    fill: none;
    stroke-width: 1px;
    shape-rendering: crispEdges;
}

.grid {
    stroke: #00f;
}

.grid .major {
    stroke: #0ff;
}

.grid text {
    font-size: 21px;
    fill: #00f;
    stroke-width: 1px;
}

.grid .column {
    text-anchor: middle;
}

.ground {
    stroke: #aaa;
}

.yellow {
    stroke: #aaaa00;
}

.red {
    stroke: #f00;
}

.magenta {
    stroke: #f0f;
}

.green {
    stroke: #0f0;
}

.ucs {
    stroke: #fff;
}

.marks {
    fill: none;
    stroke: #c000c0;
}

.notes {
    fill: #0f0;
    stroke: #0f0;
    stroke-width: 2px;
    font-size: 48px;
}

.notes .slope {
    font-size: 41px;
    stroke-width: 1px;
}

.notes .heavy {
    font-weight: bold;
    stroke-width: 3px;
}

.notes .small-note {
    font-size: 32px;
}

.view-label {
    position: absolute;
    left: 3px;
    top: 5px;
    font-size: 12px;
    color: #e4e4e4;
}

.view-cube {
    position: absolute;
    right: 46px;
    top: 56px;
    width: 52px;
    height: 51px;
    padding: 9px;
    background: rgba(205, 205, 205, 0.85);
    border: 1px solid #999;
    color: #3c3f66;
    font-weight: bold;
    font-size: 12px;
}

.view-cube span {
    display: block;
    line-height: 31px;
    background: rgba(150, 150, 165, 0.5);
}

.compass {
    position: absolute;
    right: 5px;
    top: 104px;
}

.ucs-menu {
    position: absolute;
    right: 39px;
    top: 170px;
    width: 68px;
    height: 17px;
    border-radius: 4px;
    background: rgba(190, 190, 205, 0.8);
    border: 1px solid #999;
    color: #555;
    font-size: 10px;
    line-height: 15px;
}

.ucs-menu i {
    display: inline-block;
    border: 4px solid transparent;
    border-top-color: #ddd;
    border-bottom: none;
    margin-left: 3px;
}

.nav-bar {
    position: absolute;
    right: 0;
    top: 212px;
    width: 26px;
    height: 212px;
    overflow: hidden;
    border-radius: 4px 0 0 4px;
    background: rgba(150, 152, 158, 0.5);
}

.layout-tabs {
    display: flex;
    height: 16px;
    background: #f0f0f0;
    border-top: 1px solid #777;
    font-family: "Liberation Sans", Arial, sans-serif;
    font-size: 11px;
    line-height: 16px;
    color: #111;
}

.layout-tabs button {
    width: 15px;
    display: flex;
    align-items: center;
    justify-content: center;
    border-right: 1px solid #999;
}

.layout-tabs path {
    fill: #666;
    stroke: #666;
}

.layout-tabs a {
    position: relative;
    padding: 0 10px 0 6px;
}

.layout-tabs a::after {
    content: "";
    position: absolute;
    right: 0;
    top: 0;
    height: 100%;
    border-right: 1px solid #555;
    transform: skewX(-18deg);
}

.layout-tabs .active {
    background: #212830;
    color: #fff;
    padding: 0 12px;
    clip-path: polygon(0 0, 100% 0, 46px 100%, 5px 100%);
}

/* Viewport configuration dialog */
.dialog {
    position: absolute;
    left: 628px;
    top: 308px;
    width: 644px;
    height: 323px;
    display: flex;
    flex-direction: column;
    border: 5px solid #ed1c24;
    background: #4b5560;
    padding: 3px 2px 2px 1px;
    font-family: Roboto, Tahoma, sans-serif;
    color: #111;
}

.dialog-title {
    display: flex;
    align-items: center;
    height: 28px;
    padding-left: 1px;
    padding-bottom: 2px;
    gap: 5px;
    border-top: 1px solid #9aa2aa;
    background: linear-gradient(90deg, #7b828c, #868b98 30%, #7b8090 43%, #343b62 46%, #2d345c 60%, #3d4654 70%, #2d345c 78%, #4a5260);
    font-family: "Open Sans", sans-serif;
}

.window-buttons {
    display: flex;
    align-self: flex-start;
    margin-left: auto;
}

.window-buttons button {
    width: 28px;
    height: 19px;
    display: flex;
    align-items: center;
    justify-content: center;
    background: rgba(90, 98, 115, 0.6);
    border: solid #a0a5ad;
    border-width: 0 0 1px 1px;
}

.window-buttons .close {
    width: 48px;
    border-right-width: 1px;
    border-radius: 0 0 4px 0;
}

.dialog-body {
    flex: 1;
    display: flex;
    flex-direction: column;
    position: relative;
    background: #f0f0f0;
    border: 1px solid #222a33;
    padding: 10px 14px 12px 15px;
}

.groups {
    display: flex;
    gap: 11px;
    height: 201px;
}

.options {
    width: 345px;
    display: grid;
    grid-template-columns: 148px 149px;
    column-gap: 19px;
    align-content: start;
    border: 1px solid #d5dfe5;
    border-radius: 3px;
    padding: 9px 9px;
}

.options legend {
    padding: 0 3px;
    margin-left: -4px;
}

.field {
    height: 51px;
}

.field label {
    display: block;
    height: 20px;
}

.pick {
    display: block;
    position: relative;
}

.pick select {
    appearance: none;
    width: 100%;
    height: 22px;
    padding-left: 2px;
    border: 1px solid #707070;
    border-radius: 3px;
    background: linear-gradient(#f2f2f2, #ebebeb 50%, #dddddd 50%, #cfcfcf);
}

.pick::after {
    right: 4px;
    border-top-color: #000;
    top: 9px;
}

.field input {
    width: 82px;
    height: 20px;
    border: 1px solid #e2e3ea;
    border-top-color: #abadb3;
    background: #fff;
    padding-left: 5px;
}

.preview {
    flex: 1;
    display: grid;
    grid-template-columns: 1fr 1fr;
    grid-auto-rows: 1fr;
    gap: 6px;
    margin-top: 6px;
    border: 1px solid #d5dfe5;
    border-radius: 3px;
    padding: 4px 5px 5px;
}

.preview button {
    border: 1px solid #adb2b5;
    border-radius: 3px;
    background: #f4f4f4;
    color: #838383;
}

.preview .wide {
    grid-column: span 2;
}

.actions {
    display: flex;
    justify-content: flex-end;
    gap: 8px;
    margin-top: auto;
}

.actions button {
    width: 76px;
    height: 20px;
    border: 1px solid #707070;
    border-radius: 3px;
    background: linear-gradient(#f2f2f2, #ebebeb 50%, #dddddd 50%, #cfcfcf);
}

.grip {
    position: absolute;
    right: 0;
    bottom: 0;
    stroke: #999;
}
```

FILE: script.js
```
// Section grid: one line per metre, a heavier one every ten
const grid = document.getElementById('grid');
const STEP = 23.9;
const ZERO_X = 1131;
const BASE_Y = 880; // elevation 434

const view = { left: 449, right: 1782, top: 166, bottom: 880 };

let minor = '';
let major = '';
let labels = '';

for (let m = -28; m <= 27; m++) {
    const x = Math.round(ZERO_X + m * STEP);
    const line = `M${x} ${view.top}V${view.bottom}`;
    if (m % 10 === 0 && m !== 0) {
        major += line;
    } else {
        minor += line;
    }
    if (m % 4 === 0) {
        const name = m.toFixed(3) + 'm';
        labels += `<text class="column" x="${x}" y="167">${name}</text>`;
        labels += `<text class="column" x="${x}" y="896">${name}</text>`;
    }
}

for (let e = 434; e <= 463; e++) {
    const y = Math.round(BASE_Y - (e - 434) * STEP);
    const line = `M${view.left} ${y}H${view.right}`;
    if (e % 10 === 0) {
        major += line;
    } else {
        minor += line;
    }
    const name = e.toFixed(3) + 'm';
    labels += `<text x="358" y="${y + 8}">${name}</text>`;
    labels += `<text x="1783" y="${y + 8}">${name}</text>`;
}

minor += `M${view.left} ${view.top}H${view.right}V${view.bottom}H${view.left}Z`;

grid.innerHTML = `<path d="${minor}"/><path class="major" d="${major}"/>${labels}`;
```
